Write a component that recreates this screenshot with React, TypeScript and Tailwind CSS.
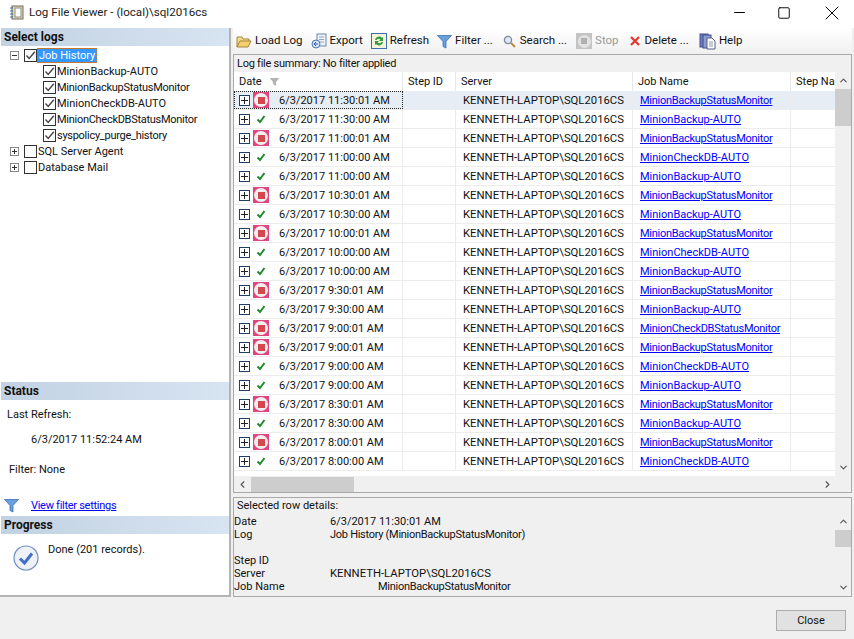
import { ChevronUp, ChevronDown, ChevronLeft, ChevronRight, Minus, Square, X } from "lucide-react"

const STATUS_JOB = "MinionBackupStatusMonitor"
const BACKUP_JOB = "MinionBackup-AUTO"
const CHECK_JOB = "MinionCheckDB-AUTO"

const rows = [
  { date: "6/3/2017 11:30:01 AM", failed: true, job: STATUS_JOB },
  { date: "6/3/2017 11:30:00 AM", failed: false, job: BACKUP_JOB },
  { date: "6/3/2017 11:00:01 AM", failed: true, job: STATUS_JOB },
  { date: "6/3/2017 11:00:00 AM", failed: false, job: CHECK_JOB },
  { date: "6/3/2017 11:00:00 AM", failed: false, job: BACKUP_JOB },
  { date: "6/3/2017 10:30:01 AM", failed: true, job: STATUS_JOB },
  { date: "6/3/2017 10:30:00 AM", failed: false, job: BACKUP_JOB },
  { date: "6/3/2017 10:00:01 AM", failed: true, job: STATUS_JOB },
  { date: "6/3/2017 10:00:00 AM", failed: false, job: CHECK_JOB },
  { date: "6/3/2017 10:00:00 AM", failed: false, job: BACKUP_JOB },
  { date: "6/3/2017 9:30:01 AM", failed: true, job: STATUS_JOB },
  { date: "6/3/2017 9:30:00 AM", failed: false, job: BACKUP_JOB },
  { date: "6/3/2017 9:00:01 AM", failed: true, job: "MinionCheckDBStatusMonitor" },
  { date: "6/3/2017 9:00:01 AM", failed: true, job: STATUS_JOB },
  { date: "6/3/2017 9:00:00 AM", failed: false, job: CHECK_JOB },
  { date: "6/3/2017 9:00:00 AM", failed: false, job: BACKUP_JOB },
  { date: "6/3/2017 8:30:01 AM", failed: true, job: STATUS_JOB },
  { date: "6/3/2017 8:30:00 AM", failed: false, job: BACKUP_JOB },
  { date: "6/3/2017 8:00:01 AM", failed: true, job: STATUS_JOB },
  { date: "6/3/2017 8:00:00 AM", failed: false, job: CHECK_JOB },
]

// the long names run narrower than the short ones in the original
const nameFit = (name: string) => (name.includes("StatusMonitor") || name.includes("_") ? "tracking-[-0.28px]" : "")

function TreeBox({ open }: { open?: boolean }) {
  return (
    <span className="flex h-[9px] w-[9px] shrink-0 items-center justify-center border border-[#8a8a8a] bg-white">
      <svg width="7" height="7" viewBox="0 0 7 7">
        <path d={open ? "M1 3.5h5" : "M1 3.5h5M3.5 1v5"} stroke="#333" strokeWidth="1" />
      </svg>
    </span>
  )
}

function RowExpander() {
  return (
    <span className="flex h-[11px] w-[11px] shrink-0 items-center justify-center border border-[#1f3f66] bg-white">
      <svg width="9" height="9" viewBox="0 0 9 9">
        <path d="M1 4.500h7M4.500 1v7" stroke="#222" strokeWidth="1" />
      </svg>
    </span>
  )
}

function Check({ on }: { on?: boolean }) {
  return (
    <span className="flex h-[13px] w-[13px] shrink-0 items-center justify-center border border-[#333] bg-white">
      {on && (
        <svg width="11" height="11" viewBox="0 0 11 11">
          <path d="M1.5 5.5 4.2 8.5 9.8 1.8" fill="none" stroke="#444" strokeWidth="1.4" />
        </svg>
      )}
    </span>
  )
}

function SectionHead({ title }: { title: string }) {
  return (
    <div className="flex h-[18px] items-center bg-gradient-to-r from-[#c2d2e2] to-[#d7e4f2] pl-[3px] text-[12px] font-bold leading-none text-[#111]">
      {title}
    </div>
  )
}

function Funnel({ size = 15 }: { size?: number }) {
  return (
    <svg width={size} height={size} viewBox="0 0 15 15" className="shrink-0">
      <path d="M.5 1.5h14L9 7.5v6.5L6 12.5v-5z" fill="#6b9fdc" stroke="#3a6fb5" strokeWidth=".8" />
    </svg>
  )
}

function ToolItem({ icon, label, disabled, className }: { icon: React.ReactNode; label: string; disabled?: boolean; className?: string }) {
  return (
    <div className={`flex items-center gap-[3px] ${disabled ? "text-[#9a9a9a]" : "text-[#111]"} ${className ?? ""}`}>
      {icon}
      <span>{label}</span>
    </div>
  )
}

function RowStatus({ failed }: { failed: boolean }) {
  if (failed) {
    return (
      <span className="flex h-[16px] w-[16px] items-center justify-center bg-[#e0457f]">
        <span className="flex h-[14px] w-[14px] items-center justify-center rounded-full bg-[#f4eeee]">
          <span className="h-[7px] w-[7px] bg-[#d4474f]" />
        </span>
      </span>
    )
  }
  return (
    <span className="flex h-[16px] w-[16px] items-center justify-center">
      <svg width="10" height="10" viewBox="0 0 10 10">
        <path d="M1.5 5.5 4 8 8.5 2" fill="none" stroke="#1f8a2e" strokeWidth="2" />
      </svg>
    </span>
  )
}

function ScrollV({ thumbClass }: { thumbClass: string }) {
  return (
    <div className="flex w-[16px] shrink-0 flex-col bg-[#f0f0f0]">
      <div className="flex h-[17px] items-center justify-center">
        <ChevronUp size={11} strokeWidth={2.5} className="text-[#555]" />
      </div>
      <div className={`${thumbClass} bg-[#cdcdcd]`} />
      <div className="flex-1" />
      <div className="flex h-[17px] items-center justify-center">
        <ChevronDown size={11} strokeWidth={2.5} className="text-[#555]" />
      </div>
    </div>
  )
}

export default function App() {
  return (
    <div className="flex h-[639px] w-[854px] flex-col overflow-hidden bg-white font-['Roboto',sans-serif] text-[11px] leading-none text-[#111]">
      {/* title bar */}
      <div className="flex h-[28px] shrink-0 items-center pb-[3px] pl-[9px]">
        <svg width="15" height="15" viewBox="0 0 15 15" className="shrink-0">
          <rect x="3" y="1" width="11" height="13" fill="#e9dca0" stroke="#6b6b6b" />
          <rect x="6" y="3" width="6" height="9" fill="#fff" stroke="#8c8c8c" />
          <path d="M1 3h3M1 6h3M1 9h3M1 12h3" stroke="#3d6fae" />
        </svg>
        <span className="ml-[5px] text-[11.6px] text-[#222]">Log File Viewer - (local)\sql2016cs</span>
        <div className="ml-auto flex items-center gap-[29px] pr-[10px]">
          <Minus size={17} strokeWidth={1.4} className="text-black" />
          <Square size={14} strokeWidth={1.6} className="text-black" />
          <X size={24} strokeWidth={1} className="text-black" />
        </div>
      </div>

      <div className="flex h-[569px] shrink-0">
        {/* left */}
        <div className="flex w-[231px] shrink-0 flex-col border-b-2 border-r-2 border-[#b4b4b4] pl-px">
          <SectionHead title="Select logs" />
          <div className="h-[336px] pt-[1px]">
            <div className="flex h-[16px] items-center pl-[9px]">
              <TreeBox open />
              <span className="ml-[5px]"><Check on /></span>
              <span className="ml-[0px] flex h-[15px] items-center border border-dotted border-[#c9762b] bg-[#3399ff] px-[1px] pt-px text-white">Job History</span>
            </div>
            {[BACKUP_JOB, STATUS_JOB, CHECK_JOB, "MinionCheckDBStatusMonitor", "syspolicy_purge_history"].map((name) => (
              <div key={name} className="flex h-[16px] items-center pl-[42px]">
                <Check on />
                <span className={`ml-px pt-px ${nameFit(name)}`}>{name}</span>
              </div>
            ))}
            {["SQL Server Agent", "Database Mail"].map((name) => (
              <div key={name} className="flex h-[16px] items-center pl-[9px]">
                <TreeBox />
                <span className="ml-[5px]"><Check /></span>
                <span className="ml-px pt-px">{name}</span>
              </div>
            ))}
          </div>
          <SectionHead title="Status" />
          <div className="flex h-[116px] flex-col">
            <div className="pl-[6px] pt-[9px]">Last Refresh:</div>
            <div className="pl-[30px] pt-[14px]">6/3/2017 11:52:24 AM</div>
            <div className="pl-[8px] pt-[19px]">Filter: None</div>
            <div className="mt-auto flex items-center pb-[3px] pl-[3px]">
              <Funnel />
              <span className="ml-[12px] tracking-[-0.28px] text-[#0000ff] underline">View filter settings</span>
            </div>
          </div>
          <SectionHead title="Progress" />
          <div className="flex pl-[12px] pt-[9px]">
            <svg width="26" height="26" viewBox="0 0 26 26" className="mt-[2px] shrink-0">
              <circle cx="13" cy="13" r="12" fill="#eef1f8" stroke="#6f8fc4" strokeWidth="1.2" />
              <path d="M7 13.5l4.5 4.5L19 8.5" fill="none" stroke="#3f6fc8" strokeWidth="3" />
            </svg>
            <span className="ml-[9px] pt-px">Done (201 records).</span>
          </div>
        </div>

        {/* right */}
        <div className="flex min-w-0 flex-1 flex-col bg-[#f0f0f0] pl-[2px] pr-[2px]">
          <div className="flex h-[26px] shrink-0 items-center gap-[8px] bg-gradient-to-b from-white to-[#f0f0f0] pl-[3px] text-[11.5px]">
            <ToolItem
              label="Load Log"
              icon={
                <svg width="16" height="15" viewBox="0 0 16 15">
                  <path d="M1 13V3h5l1 2h6v2" fill="#f6dc8c" stroke="#a5853a" />
                  <path d="M1 13l3-6h11l-3 6z" fill="#f5cf6d" stroke="#a5853a" />
                </svg>
              }
            />
            <ToolItem
              label="Export"
              icon={
                <svg width="16" height="16" viewBox="0 0 16 16">
                  <rect x="6" y="1" width="9" height="12" fill="#eef3fa" stroke="#6a86ad" />
                  <path d="M8 4h5M8 6.5h5M8 9h5" stroke="#8fa6c6" />
                  <circle cx="5" cy="11" r="4" fill="#d7e3f3" stroke="#4f78b3" />
                  <path d="M7 11H3.5M5 9l-2 2 2 2" fill="none" stroke="#2c5ea8" />
                </svg>
              }
            />
            <ToolItem
              label="Refresh"
              icon={
                <svg width="16" height="16" viewBox="0 0 16 16">
                  <rect x=".5" y=".5" width="15" height="15" fill="#f5f3d8" stroke="#3e6db0" />
                  <path d="M4 7a4 4 0 0 1 7-2l1-1v4H8l1.500-1.500A2.500 2.500 0 0 0 5.500 7z" fill="#2f9a3d" />
                  <path d="M12 9a4 4 0 0 1-7 2l-1 1V8h4L6.500 9.500A2.500 2.500 0 0 0 10.500 9z" fill="#2f9a3d" />
                </svg>
              }
            />
            <ToolItem label="Filter ..." icon={<Funnel />} />
            <ToolItem
              label="Search ..."
              className="ml-px"
              icon={
                <svg width="15" height="15" viewBox="0 0 15 15">
                  <circle cx="6" cy="6" r="3.600" fill="#dfe9f5" stroke="#7c8a9a" strokeWidth="1.300" />
                  <path d="M9 9l4 4" stroke="#b8893f" strokeWidth="2" />
                </svg>
              }
            />
            <ToolItem
              label="Stop"
              disabled
              className="ml-px"
              icon={
                <span className="flex h-[16px] w-[16px] items-center justify-center bg-[#c4c4c4]">
                  <span className="flex h-[13px] w-[13px] items-center justify-center rounded-full bg-[#e2e2e2]">
                    <span className="h-[6px] w-[6px] bg-[#b0b0b0]" />
                  </span>
                </span>
              }
            />
            <ToolItem
              label="Delete ..."
              className="ml-px"
              icon={
                <svg width="14" height="14" viewBox="0 0 14 14">
                  <path d="M3 3l8 8M11 3l-8 8" stroke="#e2382c" strokeWidth="2.200" />
                </svg>
              }
            />
            <ToolItem
              label="Help"
              className="ml-[2px]"
              icon={
                <svg width="17" height="17" viewBox="0 0 17 17">
                  <rect x="1" y="1" width="8" height="13" fill="#6c7fbe" stroke="#414f8c" />
                  <rect x="4" y="2" width="8" height="13" fill="#8b9bd0" stroke="#414f8c" />
                  <path d="M8 5h5l3 3v8H8z" fill="#fff" stroke="#55617f" />
                  <path d="M10 9h4M10 11h4M10 13h4" stroke="#8a94aa" />
                </svg>
              }
            />
          </div>

          {/* grid panel */}
          <div className="flex h-[439px] shrink-0 flex-col border border-[#a9a9a9]">
            <div className="flex h-[17px] shrink-0 items-center pl-[3px] tracking-[-0.25px]">Log file summary: No filter applied</div>
            <div className="flex min-h-0 flex-1">
              <div className="flex min-w-0 flex-1 flex-col overflow-hidden bg-white">
                <div className="flex h-[19px] shrink-0 items-center">
                  <div className="flex h-full w-[169px] shrink-0 items-center border-r border-[#e8e8e8] pl-[5px]">
                    Date
                    <svg width="9" height="8" viewBox="0 0 9 8" className="ml-[8px]">
                      <path d="M.5.500h8L5.500 4v3.500L3.500 6V4z" fill="#b5b5b5" stroke="#8c8c8c" strokeWidth=".5" />
                    </svg>
                  </div>
                  <div className="flex h-full w-[53px] shrink-0 items-center border-r border-[#e8e8e8] pl-[5px]">Step ID</div>
                  <div className="flex h-full w-[177px] shrink-0 items-center border-r border-[#e8e8e8] pl-[5px]">Server</div>
                  <div className="flex h-full w-[158px] shrink-0 items-center border-r border-[#e8e8e8] pl-[5px]">Job Name</div>
                  <div className="flex h-full min-w-0 flex-1 items-center overflow-hidden whitespace-nowrap pl-[5px]">Step Na</div>
                </div>
                {rows.map((row, i) => (
                  <div key={i} className={`flex h-[19px] shrink-0 items-center border-b border-[#ececec] ${i === 0 ? "bg-[#e7edf4]" : ""}`}>
                    <div className={`flex h-full w-[169px] shrink-0 items-center pl-[5px] ${i === 0 ? "outline-1 -outline-offset-1 outline-dotted outline-[#222]" : "border-r border-[#ececec]"}`}>
                      <RowExpander />
                      <span className="ml-[3px]"><RowStatus failed={row.failed} /></span>
                      <span className="ml-[10px] whitespace-nowrap pt-px">{row.date}</span>
                    </div>
                    <div className="h-full w-[53px] shrink-0 border-r border-[#ececec]" />
                    <div className="flex h-full w-[177px] shrink-0 items-center border-r border-[#ececec] pl-[7px] pt-px text-[11.3px] whitespace-nowrap">KENNETH-LAPTOP\SQL2016CS</div>
                    <div className="flex h-full w-[158px] shrink-0 items-center border-r border-[#ececec] pl-[7px] pt-px whitespace-nowrap text-[#0000ff]">
                      <span className={`underline ${nameFit(row.job)}`}>{row.job}</span>
                    </div>
                    <div className="h-full flex-1" />
                  </div>
                ))}
              </div>
              <ScrollV thumbClass="h-[37px]" />
            </div>
            <div className="flex h-[16px] shrink-0 items-center bg-[#f0f0f0]">
              <div className="flex w-[17px] items-center justify-center">
                <ChevronLeft size={11} strokeWidth={2.5} className="text-[#555]" />
              </div>
              <div className="h-[15px] w-[103px] bg-[#cdcdcd]" />
              <div className="flex flex-1 justify-end pr-[18px]">
                <ChevronRight size={11} strokeWidth={2.5} className="text-[#555]" />
              </div>
            </div>
          </div>

          {/* details */}
          <div className="mt-[4px] flex h-[100px] shrink-0 border border-[#a9a9a9]">
            <div className="min-w-0 flex-1 pt-[2px]">
              <div className="h-[14px] pl-[3px]">Selected row details:</div>
              <div className="flex h-[14px] items-center"><span className="w-[96px]">Date</span>6/3/2017 11:30:01 AM</div>
              <div className="flex h-[13px] items-center"><span className="w-[96px]">Log</span><span className="tracking-[-0.28px]">Job History (MinionBackupStatusMonitor)</span></div>
              <div className="h-[13px]" />
              <div className="flex h-[13px] items-center"><span className="w-[96px]">Step ID</span></div>
              <div className="flex h-[13px] items-center"><span className="w-[96px]">Server</span><span className="text-[11.3px]">KENNETH-LAPTOP\SQL2016CS</span></div>
              <div className="flex h-[13px] items-center"><span className="w-[144px]">Job Name</span><span className="tracking-[-0.28px]">MinionBackupStatusMonitor</span></div>
            </div>
            <div className="mt-[15px] flex">
              <ScrollV thumbClass="h-[17px]" />
            </div>
          </div>
        </div>
      </div>

      {/* footer */}
      <div className="flex flex-1 items-start justify-end bg-[#f0f0f0] pr-[8px] pt-[13px]">
        <button className="flex h-[21px] w-[70px] items-center justify-center border border-[#adadad] bg-[#e1e1e1]">Close</button>
      </div>
    </div>
  )
}
